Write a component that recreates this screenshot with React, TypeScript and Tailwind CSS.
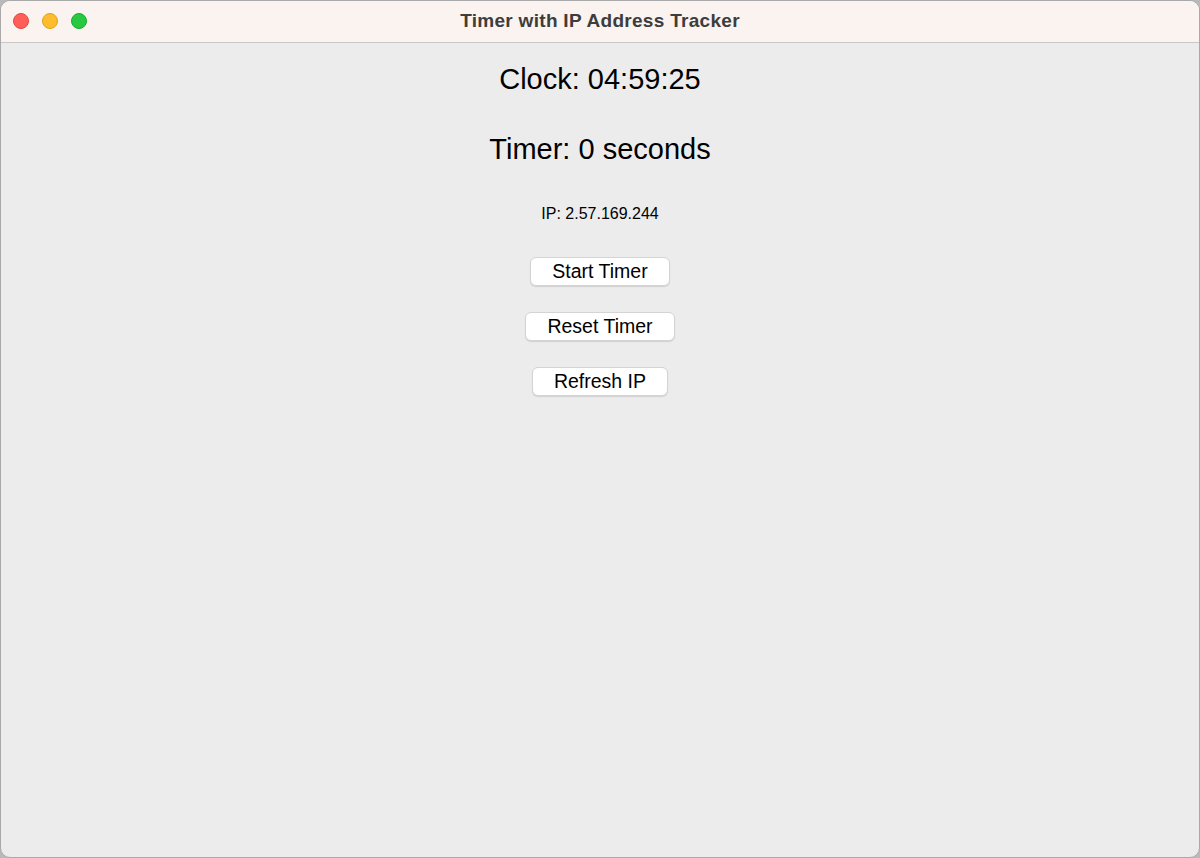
import { useState } from "react";

function TrafficLights() {
  return (
    <div className="flex items-center gap-[13px]">
      <span className="h-4 w-4 rounded-full bg-[#ff5f57] border border-[#e2463f]" />
      <span className="h-4 w-4 rounded-full bg-[#febc2e] border border-[#e1a116]" />
      <span className="h-4 w-4 rounded-full bg-[#28c840] border border-[#14ae2a]" />
    </div>
  );
}

function MacButton({ label, onClick }: { label: string; onClick?: () => void }) {
  return (
    <button
      onClick={onClick}
      className="h-[29px] px-[21px] bg-white text-black text-[19.5px] leading-none rounded-[6px] border border-[#d4d4d4] shadow-[0_1px_1px_rgba(0,0,0,0.12)]"
    >
      {label}
    </button>
  );
}

export default function App() {
  const [seconds, setSeconds] = useState(0);

  return (
    <div className="h-[858px] w-[1200px] bg-[#b9b9b9] font-['Liberation_Sans',Arial,sans-serif]">
      <div className="flex h-full w-full flex-col overflow-hidden rounded-[10px] border border-[#a9a9a9] bg-[#ececec]">
        <div className="relative flex h-[42px] shrink-0 items-center justify-center border-b border-[#c8c8c8] bg-[#faf3ef]">
          <div className="absolute left-[12px] top-[12px]">
            <TrafficLights />
          </div>
          <span className="text-[19px] font-bold tracking-[0.3px] text-[#3d3d3d]">Timer with IP Address Tracker</span>
        </div>

        <div className="flex flex-col items-center pt-[20px] text-black">
          <div className="text-[29px] leading-[32px]">Clock: 04:59:25</div>
          <div className="mt-[38px] text-[29px] leading-[32px]">Timer: {seconds} seconds</div>
          <div className="mt-[39px] text-[16px] leading-[20px]">IP: 2.57.169.244</div>
          <div className="mt-[33px] flex flex-col items-center gap-[26px]">
            <MacButton label="Start Timer" onClick={() => setSeconds((s) => s + 1)} />
            <MacButton label="Reset Timer" onClick={() => setSeconds(0)} />
            <MacButton label="Refresh IP" />
          </div>
        </div>
      </div>
    </div>
  );
}
